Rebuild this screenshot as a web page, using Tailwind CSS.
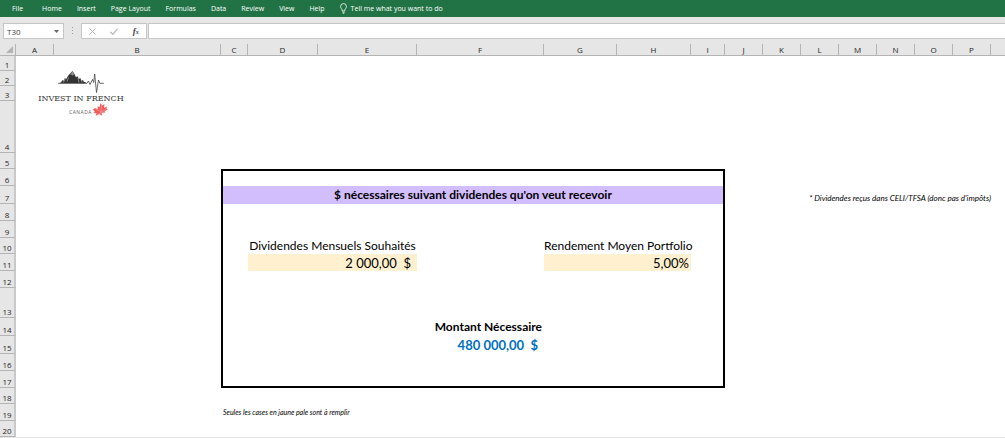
<!DOCTYPE html>
<html lang="fr">
<head>
    <meta charset="UTF-8" />
    <meta name="viewport" content="width=device-width, initial-scale=1.0" />
    <title>Invest in French - Dividendes</title>
    <script src="https://cdn.jsdelivr.net/npm/@tailwindcss/browser@4"></script>
</head>
<body class="bg-[#e6e6e6] font-['Open_Sans',sans-serif] text-[#262626]">
    <!-- Ribbon tabs -->
    <nav class="flex items-center gap-[15px] h-[17px] pl-3 bg-[#217346] text-white text-[7px] leading-none whitespace-nowrap">
        <button class="mr-1">File</button>
        <button>Home</button>
        <button>Insert</button>
        <button>Page Layout</button>
        <button>Formulas</button>
        <button>Data</button>
        <button>Review</button>
        <button>View</button>
        <button>Help</button>
        <button class="flex items-center gap-1">
            <svg class="w-[7px] h-[11px]" viewBox="0 0 7 11" fill="none" stroke="currentColor" stroke-width="0.8">
                <path d="M2.2 8V6.9C2 6 .6 5.2.6 3.5a2.9 2.9 0 0 1 5.8 0C6.4 5.2 5 6 4.8 6.9V8zM2.3 9.2h2.4M2.8 10.3h1.4" />
            </svg>
            Tell me what you want to do
        </button>
    </nav>

    <!-- Formula bar -->
    <div class="flex items-stretch h-[27px] pt-[6px] pb-[5px] pl-[3px] text-[8px]">
        <div class="flex items-center w-[61px] bg-white border border-[#c6c6c6]">
            <input aria-label="Name box" value="T30" class="w-0 flex-1 pl-[3px] leading-none outline-none text-[#444]" />
            <button aria-label="Open name list" class="flex px-1">
                <svg class="w-[5px] h-[3px]" viewBox="0 0 5 3" fill="#666"><path d="M0 0h5L2.5 3z" /></svg>
            </button>
        </div>
        <div class="flex items-center justify-center w-[17px]">
            <svg class="w-[2px] h-[8px]" viewBox="0 0 2 8" fill="#a0a0a0"><path d="M0 0h1v1H0zM0 3h1v1H0zM0 6h1v1H0z" /></svg>
        </div>
        <div class="flex items-center justify-around w-[66px] mr-[1px] bg-white border border-[#c6c6c6]">
            <button aria-label="Cancel">
                <svg class="w-[7px] h-[7px]" viewBox="0 0 7 7" stroke="#b5b5b5"><path d="M.5.5l6 6M6.5.5l-6 6" /></svg>
            </button>
            <button aria-label="Enter">
                <svg class="w-[8px] h-[7px]" viewBox="0 0 8 7" fill="none" stroke="#b5b5b5" stroke-width="1.2"><path d="M.5 4l2.3 2.3L7.5.8" /></svg>
            </button>
            <button class="font-['Liberation_Serif',serif] italic font-bold leading-none text-[9px] text-[#444]">f<span class="text-[6px]">x</span></button>
        </div>
        <input aria-label="Formula" class="w-0 flex-1 bg-white border border-r-0 border-[#c6c6c6] px-1 outline-none" />
    </div>

    <!-- Sheet -->
    <main class="relative">
        <table class="w-full table-fixed border-separate border-spacing-0 bg-white font-['Comic_Sans_MS','Lato',sans-serif] text-black text-[12px] leading-none whitespace-nowrap [&_th]:bg-[#e6e6e6] [&_th]:p-0 [&_td]:p-0 [&_th]:border-[#b4b4b4] [&_th]:font-normal [&_th]:text-[8px] [&_th]:text-[#262626] [&_th]:font-['Open_Sans',sans-serif] [&_tbody_th]:align-bottom [&_tbody_th]:pb-[1px] [&_tbody_th]:border-r-2 [&_tbody_th]:border-b [&_tbody_th]:border-r-[#c9c9c9] [&_thead_th]:border-r [&_thead_th]:border-b">
            <colgroup>
                <col class="w-[16px]" />
                <col class="w-[38px]" />
                <col class="w-[167px]" />
                <col class="w-[27px]" />
                <col class="w-[70px]" />
                <col class="w-[99px]" />
                <col class="w-[127px]" />
                <col class="w-[73px]" />
                <col class="w-[74px]" />
                <col class="w-[34px]" />
                <col class="w-[38px]" />
                <col class="w-[38px]" />
                <col class="w-[38px]" />
                <col class="w-[38px]" />
                <col class="w-[38px]" />
                <col class="w-[38px]" />
                <col class="w-[38px]" />
                <col />
            </colgroup>
            <thead>
                <tr class="h-[12px]">
                    <th aria-label="Select all"><svg class="ml-[6px] w-[7px] h-[7px]" viewBox="0 0 7 7" fill="#b4b4b4"><path d="M7 0v7H0z" /></svg></th>
                    <th>A</th>
                    <th>B</th>
                    <th>C</th>
                    <th>D</th>
                    <th>E</th>
                    <th>F</th>
                    <th>G</th>
                    <th>H</th>
                    <th>I</th>
                    <th>J</th>
                    <th>K</th>
                    <th>L</th>
                    <th>M</th>
                    <th>N</th>
                    <th>O</th>
                    <th>P</th>
                    <th class="border-r-0!"></th>
                </tr>
            </thead>
            <tbody>
                <tr class="h-[15px]"><th>1</th><td colspan="17"></td></tr>
                <tr class="h-[15px]"><th>2</th><td colspan="17"></td></tr>
                <tr class="h-[15px]"><th>3</th><td colspan="17"></td></tr>
                <tr class="h-[52px]"><th>4</th><td colspan="17"></td></tr>
                <tr class="h-[16px]"><th>5</th><td colspan="17"></td></tr>
                <tr class="h-[17px]"><th>6</th><td colspan="2"></td><td colspan="7" class="border-2 border-b-0"></td><td colspan="8"></td></tr>
                <tr class="h-[18px]">
                    <th>7</th>
                    <td colspan="2"></td>
                    <td colspan="7" class="border-x-2 bg-[#d2bdfd] text-center font-bold">$ nécessaires suivant dividendes qu'on veut recevoir</td>
                    <td colspan="7" class="pb-[2px]! align-bottom text-right italic text-[8px]">* Dividendes reçus dans CELI/TFSA (donc pas d'impôts)</td>
                    <td></td>
                </tr>
                <tr class="h-[17px]"><th>8</th><td colspan="2"></td><td colspan="7" class="border-x-2"></td><td colspan="8"></td></tr>
                <tr class="h-[17px]"><th>9</th><td colspan="2"></td><td colspan="7" class="border-x-2"></td><td colspan="8"></td></tr>
                <tr class="h-[16px]">
                    <th>10</th>
                    <td colspan="2"></td>
                    <td class="border-l-2"></td>
                    <td colspan="2" class="text-center"><label for="dividendes">Dividendes Mensuels Souhaités</label></td>
                    <td></td>
                    <td colspan="2" class="text-center"><label for="rendement">Rendement Moyen Portfolio</label></td>
                    <td class="border-r-2"></td>
                    <td colspan="8"></td>
                </tr>
                <tr class="h-[17px]">
                    <th>11</th>
                    <td colspan="2"></td>
                    <td class="border-l-2"></td>
                    <td colspan="2" class="bg-[#fff1cf]"><input id="dividendes" value="2 000,00  $" class="block w-full h-4 pr-[6px] text-right text-[13px] outline-none" /></td>
                    <td></td>
                    <td colspan="2" class="bg-[#fff1cf]"><input id="rendement" value="5,00%" class="block w-full h-4 pr-[2px] text-right text-[13px] outline-none" /></td>
                    <td class="border-r-2"></td>
                    <td colspan="8"></td>
                </tr>
                <tr class="h-[17px]"><th>12</th><td colspan="2"></td><td colspan="7" class="border-x-2"></td><td colspan="8"></td></tr>
                <tr class="h-[30px]"><th>13</th><td colspan="2"></td><td colspan="7" class="border-x-2"></td><td colspan="8"></td></tr>
                <tr class="h-[18px]">
                    <th>14</th>
                    <td colspan="2"></td>
                    <td colspan="3" class="border-l-2"></td>
                    <td class="pr-[2px]! text-right font-bold">Montant Nécessaire</td>
                    <td colspan="3" class="border-r-2"></td>
                    <td colspan="8"></td>
                </tr>
                <tr class="h-[18px]">
                    <th>15</th>
                    <td colspan="2"></td>
                    <td colspan="3" class="border-l-2"></td>
                    <td class="pr-[6px]! text-right font-bold text-[13px] text-[#0070c0] whitespace-pre">480 000,00  $</td>
                    <td colspan="3" class="border-r-2"></td>
                    <td colspan="8"></td>
                </tr>
                <tr class="h-[17px]"><th>16</th><td colspan="2"></td><td colspan="7" class="border-x-2"></td><td colspan="8"></td></tr>
                <tr class="h-[17px]"><th>17</th><td colspan="2"></td><td colspan="7" class="border-2 border-t-0"></td><td colspan="8"></td></tr>
                <tr class="h-[16px]"><th>18</th><td colspan="17"></td></tr>
                <tr class="h-[17px]">
                    <th>19</th>
                    <td colspan="2"></td>
                    <td colspan="15" class="pl-[2px]! italic text-[7px]">Seules les cases en jaune pale sont à remplir</td>
                </tr>
                <tr class="h-[16px]"><th>20</th><td colspan="17"></td></tr>
            </tbody>
        </table>

        <!-- Logo, floats over the cells -->
        <svg class="absolute left-[38px] top-[25px] w-[88px] h-[50px]" viewBox="0 0 88 50" role="img" aria-label="Invest in French Canada">
            <path d="M21 14.2l2-.7 1.500-2.500.8 1 1.700-3 1 1.200 2.500-4L34.500 2l2 3 1.500 3.500 1.200-1.500 1.800 3 1.200-1 1.500 2.700 1.300-.7.800 1.700 1.500.5 1 1z" fill="#333" />
            <path d="M34.500 2l-2.300 4.300 1.300-.8.8 1.300 1-1.200 1.300.8z" fill="#999" />
            <path d="M25.500 13.500l1.500-3.500M29 12.500l1.500-4M40 9l1 4.500M43 10.500l1 3" stroke="#ccc" stroke-width=".6" />
            <path d="M20 14.300h29l1.500-2.300 1.500 3.500 2.500-5 1.200 3 1-8.500 1.800 18.500 2-12.500 1.300 3.300h4" fill="none" stroke="#444" stroke-width=".8" />
            <text x="43" y="32" text-anchor="middle" class="font-['DejaVu_Serif',serif] text-[8px]" fill="#333">INVEST IN FRENCH</text>
            <text x="31" y="45" class="font-['Open_Sans',sans-serif] text-[5px] tracking-widest" fill="#666">CANADA</text>
            <path d="M56.500 39l3.500 1-.5-3 2 1.300 1-4.300 1.800 2.500 2.200-1.500-.5 4 3-1.500-.5 2.300 1.500.2-3.500 2.500.8 1-3.800.2.500 3-3-1.700-3.500 2 1-2.700-3-.3 1.300-1.300-2.300-2.400 2-.3z" fill="#f25c5c" />
            <path d="M58 40l5 3 .5-7M63 43l5-2.500M63 43l-4 4.500" fill="none" stroke="#fbb" stroke-width=".5" />
        </svg>
    </main>
</body>
</html>
